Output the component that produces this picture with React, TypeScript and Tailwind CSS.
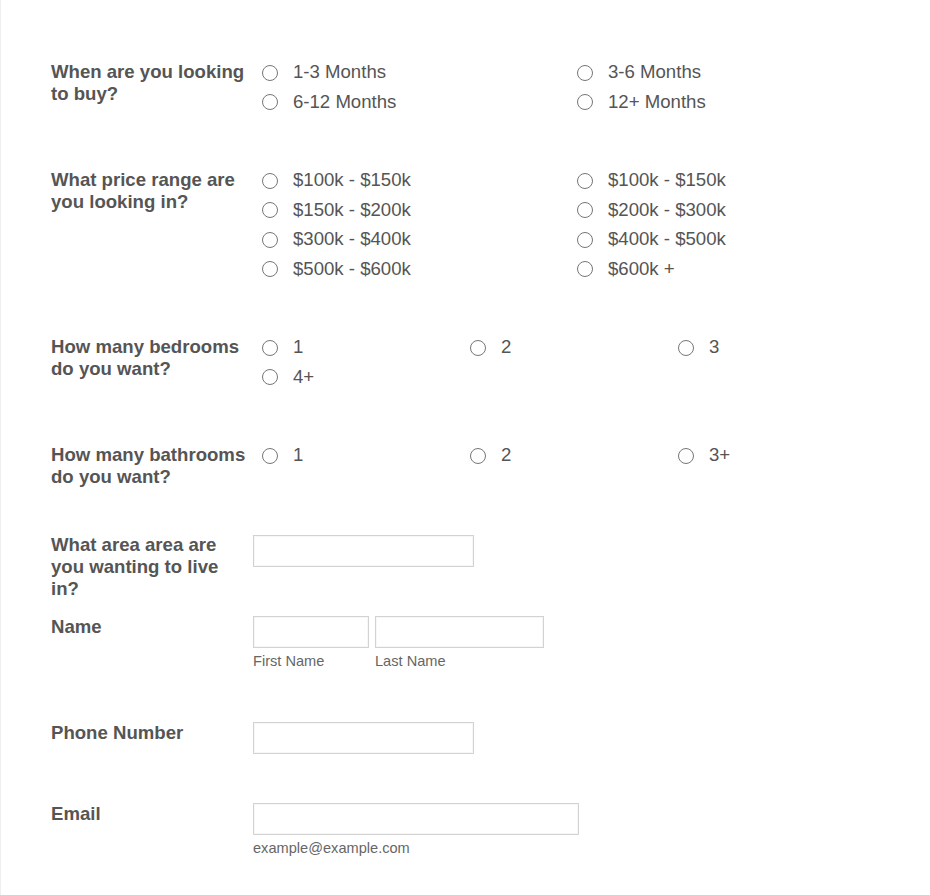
import React from 'react'

const font = { fontFamily: '"Liberation Sans", Arial, sans-serif' }

// One radio option: circle + text, 29.5px row
const Radio = ({ label }: { label: string }) => (
  <div className="flex h-[29.5px] items-center">
    <span className="ml-[9px] h-[16px] w-[16px] shrink-0 rounded-full border border-[#767676] bg-white" />
    <span className="ml-[15px] text-[18.6px] leading-none text-[#555]">{label}</span>
  </div>
)

const Label = ({ children, pad }: { children: React.ReactNode; pad?: boolean }) => (
  <div
    className={`w-[202px] shrink-0 pr-1 text-[18.6px] font-bold leading-[22px] text-[#555] ${
      pad ? 'pt-[3px]' : ''
    }`}
  >
    {children}
  </div>
)

const RadioRow = ({
  label,
  options,
  cols,
  className,
}: {
  label: string
  options: string[]
  cols: 2 | 3
  className: string
}) => (
  <div className={`flex ${className}`}>
    <Label pad>{label}</Label>
    <div className={`grid ${cols === 2 ? 'grid-cols-[315px_315px]' : 'grid-cols-[208px_208px_208px]'}`}>
      {options.map((o, i) => (
        <Radio key={i} label={o} />
      ))}
    </div>
  </div>
)

const Input = ({ w }: { w: string }) => (
  <div className={`h-[32px] ${w} border border-[#d2d2d2] bg-white shadow-[inset_0_0_0_1px_rgba(0,0,0,0.03)]`} />
)

export default function App() {
  return (
    <div className="min-h-[895px] w-[930px] border-l border-[#efefef] bg-white" style={font}>
      <div className="pl-[50px] pt-[58px]">
        <RadioRow
          className=""
          label="When are you looking to buy?"
          cols={2}
          options={['1-3 Months', '3-6 Months', '6-12 Months', '12+ Months']}
        />
        <RadioRow
          className="mt-[49px]"
          label="What price range are you looking in?"
          cols={2}
          options={[
            '$100k - $150k',
            '$100k - $150k',
            '$150k - $200k',
            '$200k - $300k',
            '$300k - $400k',
            '$400k - $500k',
            '$500k - $600k',
            '$600k +',
          ]}
        />
        <RadioRow
          className="mt-[49px]"
          label="How many bedrooms do you want?"
          cols={3}
          options={['1', '2', '3', '4+']}
        />
        <RadioRow
          className="mt-[49px]"
          label="How many bathrooms do you want?"
          cols={3}
          options={['1', '2', '3+']}
        />

        <div className="mt-[46px] flex">
          <Label>What area area are you wanting to live in?</Label>
          <div className="mt-[1px]">
            <Input w="w-[221px]" />
          </div>
        </div>

        <div className="mt-[16px] flex">
          <Label>Name</Label>
          <div className="flex gap-[6px]">
            <div>
              <Input w="w-[116px]" />
              <div className="mt-[4px] text-[14.6px] leading-[18px] text-[#666]">First Name</div>
            </div>
            <div>
              <Input w="w-[169px]" />
              <div className="mt-[4px] text-[14.6px] leading-[18px] text-[#666]">Last Name</div>
            </div>
          </div>
        </div>

        <div className="mt-[52px] flex">
          <Label>Phone Number</Label>
          <Input w="w-[221px]" />
        </div>

        <div className="mt-[49px] flex">
          <Label>Email</Label>
          <div>
            <Input w="w-[326px]" />
            <div className="mt-[4px] text-[14.6px] leading-[18px] text-[#666]">example@example.com</div>
          </div>
        </div>
      </div>
    </div>
  )
}
